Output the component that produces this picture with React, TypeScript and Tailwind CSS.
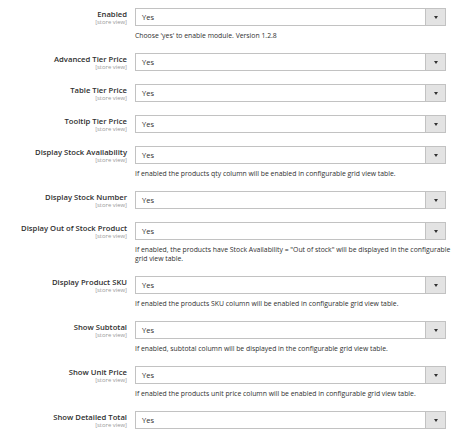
// Store configuration panel: label column on the left, select + optional note on the right.

const rows: { label: string; note?: string }[] = [
  { label: "Enabled", note: "Choose 'yes' to enable module. Version 1.2.8" },
  { label: "Advanced Tier Price" },
  { label: "Table Tier Price" },
  { label: "Tooltip Tier Price" },
  {
    label: "Display Stock Availability",
    note: "If enabled the products qty column will be enabled in configurable grid view table.",
  },
  { label: "Display Stock Number" },
  {
    label: "Display Out of Stock Product",
    note: 'If enabled, the products have Stock Availability = "Out of stock" will be displayed in the configurable grid view table.',
  },
  {
    label: "Display Product SKU",
    note: "If enabled the products SKU column will be enabled in configurable grid view table.",
  },
  {
    label: "Show Subtotal",
    note: "If enabled, subtotal column will be displayed in the configurable grid view table.",
  },
  {
    label: "Show Unit Price",
    note: "If enabled the products unit price column will be enabled in configurable grid view table.",
  },
  { label: "Show Detailed Total" },
];

function SelectBox() {
  return (
    <div className="flex h-[18px] w-[311px] border border-[#c2c2c2] bg-white">
      <div className="flex-1 pl-[6px] text-[7.5px] leading-[16px] text-[#303030]">Yes</div>
      <div className="flex w-[20px] items-center justify-center border-l border-[#c2c2c2] bg-[#e3e3e3]">
        <div className="h-0 w-0 border-x-[2px] border-t-[3px] border-x-transparent border-t-[#333]" />
      </div>
    </div>
  );
}

function ConfigRow({ label, note }: { label: string; note?: string }) {
  return (
    <div className="flex">
      <div className="w-[135px] shrink-0 pr-[8px] pt-[2px] text-right">
        <div className="whitespace-nowrap text-[7.7px] font-semibold leading-[9px] text-[#303030]">
          {label}
        </div>
        <div className="text-[5.9px] leading-[7px] text-[#999]">[store view]</div>
      </div>
      <div className="w-[325px]">
        <SelectBox />
        {note && (
          <p className="mt-[5px] text-[6.85px] leading-[9px] text-[#303030]">{note}</p>
        )}
      </div>
    </div>
  );
}

export default function App() {
  return (
    <div
      className="min-h-screen bg-white pt-[8px]"
      style={{ fontFamily: '"Open Sans", "Noto Sans", sans-serif' }}
    >
      <div className="flex flex-col gap-[13px]">
        {rows.map((r) => (
          <ConfigRow key={r.label} label={r.label} note={r.note} />
        ))}
      </div>
    </div>
  );
}
